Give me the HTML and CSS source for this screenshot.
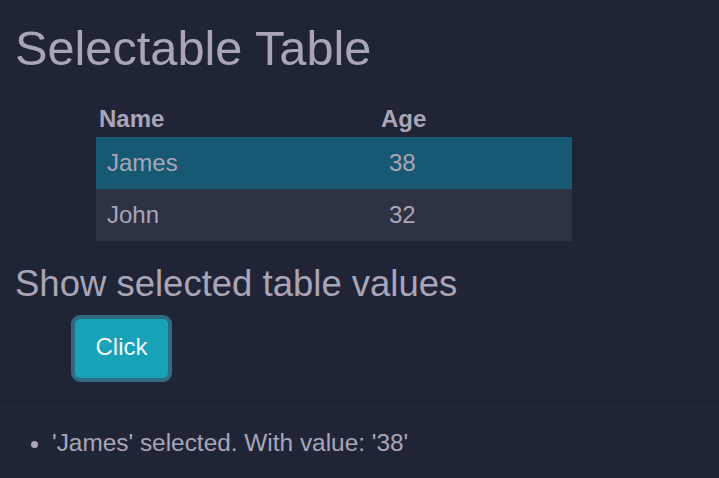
FILE: index.html
```html
<!DOCTYPE html>
<html>
<head>
<meta charset="utf-8">
<link rel="stylesheet" href="styles.css">
</head>
<body>
<main class="page">
  <h1 class="title">Selectable Table</h1>
  <table class="grid">
    <thead>
      <tr><th class="col-name">Name</th><th>Age</th></tr>
    </thead>
    <tbody>
      <tr class="selected"><td>James</td><td>38</td></tr>
      <tr class="plain"><td>John</td><td>32</td></tr>
    </tbody>
  </table>
  <h2 class="subtitle">Show selected table values</h2>
  <div class="actions"><button class="btn">Click</button></div>
</main>
<hr class="divider">
<ul class="results">
  <li>'James' selected. With value: '38'</li>
</ul>
</body>
</html>
```
FILE: styles.css
```css
html, body {
  margin: 0;
  padding: 0;
  background: #1f2536;
  color: #aaa5b6;
  font-family: "Liberation Sans", Arial, sans-serif;
}
.page {
  padding: 20px 0 0 15px;
}
.title {
  margin: 0;
  font-size: 48.7px;
  font-weight: normal;
  line-height: 56px;
}
.grid {
  margin: 29px 0 0 81px;
  width: 476px;
  border-collapse: collapse;
  font-size: 24px;
  line-height: 28px;
}
.grid th {
  text-align: left;
  font-weight: bold;
  padding: 0 0 4px 3px;
}
.grid .col-name {
  width: 279px;
}
.grid td {
  padding: 12px 11px;
}
.selected {
  background: #175873;
}
.plain {
  background: #2d3245;
}
.subtitle {
  margin: 22px 0 0 0;
  font-size: 36.5px;
  font-weight: normal;
  line-height: 42px;
}
.actions {
  padding: 14px 0 0 60px;
}
.btn {
  width: 93px;
  height: 59px;
  border: none;
  border-radius: 5px;
  background: #17a2b8;
  color: #f2f6f8;
  font-family: "Liberation Sans", Arial, sans-serif;
  font-size: 24px;
  line-height: 28px;
  box-shadow: 0 0 0 4px #2e6b80;
  padding: 0 0 3px 0;
}
.divider {
  margin: 23px 0 0 0;
  border: none;
  border-top: 1px solid #1a1f2e;
  height: 0;
}
.results {
  margin: 27px 0 0 0;
  padding-left: 52px;
  font-size: 24.4px;
  line-height: 28px;
}
```
